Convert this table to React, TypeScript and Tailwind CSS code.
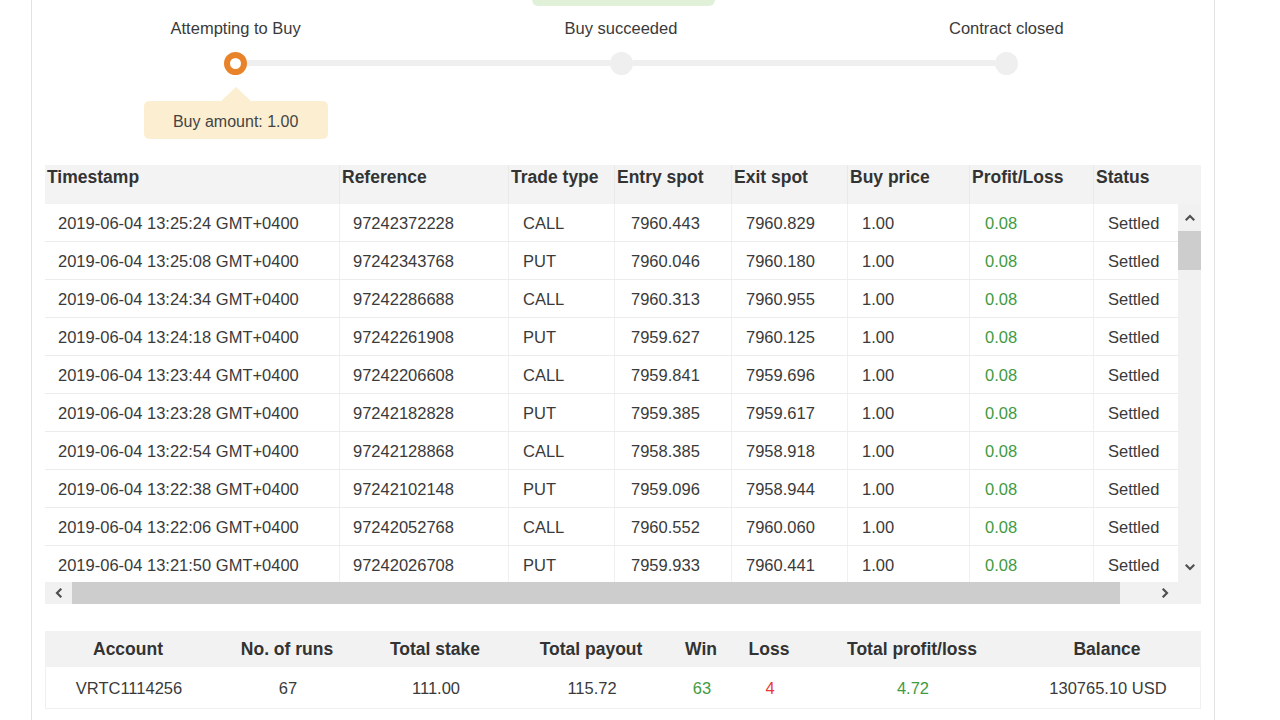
import React from 'react';

type Trade = {
  time: string;
  ref: string;
  type: 'CALL' | 'PUT';
  entry: string;
  exit: string;
};

const trades: Trade[] = [
  { time: '2019-06-04 13:25:24 GMT+0400', ref: '97242372228', type: 'CALL', entry: '7960.443', exit: '7960.829' },
  { time: '2019-06-04 13:25:08 GMT+0400', ref: '97242343768', type: 'PUT', entry: '7960.046', exit: '7960.180' },
  { time: '2019-06-04 13:24:34 GMT+0400', ref: '97242286688', type: 'CALL', entry: '7960.313', exit: '7960.955' },
  { time: '2019-06-04 13:24:18 GMT+0400', ref: '97242261908', type: 'PUT', entry: '7959.627', exit: '7960.125' },
  { time: '2019-06-04 13:23:44 GMT+0400', ref: '97242206608', type: 'CALL', entry: '7959.841', exit: '7959.696' },
  { time: '2019-06-04 13:23:28 GMT+0400', ref: '97242182828', type: 'PUT', entry: '7959.385', exit: '7959.617' },
  { time: '2019-06-04 13:22:54 GMT+0400', ref: '97242128868', type: 'CALL', entry: '7958.385', exit: '7958.918' },
  { time: '2019-06-04 13:22:38 GMT+0400', ref: '97242102148', type: 'PUT', entry: '7959.096', exit: '7958.944' },
  { time: '2019-06-04 13:22:06 GMT+0400', ref: '97242052768', type: 'CALL', entry: '7960.552', exit: '7960.060' },
  { time: '2019-06-04 13:21:50 GMT+0400', ref: '97242026708', type: 'PUT', entry: '7959.933', exit: '7960.441' },
];

const headers = ['Timestamp', 'Reference', 'Trade type', 'Entry spot', 'Exit spot', 'Buy price', 'Profit/Loss', 'Status'];

const summaryHead = ['Account', 'No. of runs', 'Total stake', 'Total payout', 'Win', 'Loss', 'Total profit/loss', 'Balance'];

// small chevrons used by the fake scrollbars
const Chevron: React.FC<{ dir: 'up' | 'down' | 'left' | 'right' }> = ({ dir }) => {
  const d = {
    up: 'M1.5 6.5 L5 3 L8.5 6.5',
    down: 'M1.5 3.5 L5 7 L8.5 3.5',
    left: 'M6.5 1.5 L3 5 L6.5 8.5',
    right: 'M3.5 1.5 L7 5 L3.5 8.5',
  }[dir];
  return (
    <svg width="10" height="10" viewBox="0 0 10 10">
      <path d={d} fill="none" stroke="#505050" strokeWidth="2.2" strokeLinecap="square" />
    </svg>
  );
};

const Step: React.FC<{ label: string; first?: boolean; last?: boolean; active?: boolean; children?: React.ReactNode }> = ({
  label,
  first,
  last,
  active,
  children,
}) => (
  <div className="flex flex-col items-center">
    <div className="text-[16.5px] leading-[19px] text-[#3a3a3a]">{label}</div>
    <div className="mt-[13px] flex h-[24px] w-full items-center">
      <div className={`h-[6px] flex-1 ${first ? '' : 'bg-[#efefef]'}`} />
      {active ? (
        <div className="h-[23px] w-[23px] rounded-full border-[6px] border-[#e8832a] bg-white" />
      ) : (
        <div className="h-[23px] w-[23px] rounded-full bg-[#efefef]" />
      )}
      <div className={`h-[6px] flex-1 ${last ? '' : 'bg-[#efefef]'}`} />
    </div>
    {children}
  </div>
);

const App: React.FC = () => {
  return (
    <div className="h-[720px] w-[1280px] overflow-hidden bg-white font-['Liberation_Sans',Arial,sans-serif] text-[#333]">
      <div className="ml-[31px] h-full w-[1184px] border-x border-[#e2e2e2] bg-white">
        <div className="flex justify-center">
          <div className="h-[6px] w-[183px] rounded-b-[8px] bg-[#e0f0d9]" />
        </div>

        <div className="mt-[13px] grid grid-cols-3 pl-[11px] pr-[15px]">
          <Step label="Attempting to Buy" first active>
            <div className="mt-[12px] flex flex-col items-center">
              <div className="h-0 w-0 border-x-[15px] border-b-[14px] border-x-transparent border-b-[#fcefd1]" />
              <div className="flex h-[38px] w-[184px] items-center justify-center rounded-[5px] bg-[#fcefd1] pt-[3px] text-[16px] text-[#444]">
                Buy amount: 1.00
              </div>
            </div>
          </Step>
          <Step label="Buy succeeded" />
          <Step label="Contract closed" last />
        </div>

        <div className="mt-[26px] px-[13px]">
          <div className="grid h-[39px] grid-cols-[295px_169px_106px_117px_116px_122px_124px_107px] bg-[#f3f3f3]">
            {headers.map((h, i) => (
              <div
                key={h}
                className={`pl-[2px] pt-[2px] text-[17.5px] font-bold leading-[21px] text-[#333] ${
                  i < headers.length - 1 ? 'border-r border-[#e9e9e9]' : ''
                }`}
              >
                {h}
              </div>
            ))}
          </div>

          <div className="flex">
            <div className="w-[1133px]">
              <div className="h-[378px] overflow-hidden">
                {trades.map((t) => (
                  <div
                    key={t.ref}
                    className="grid h-[38px] grid-cols-[295px_169px_106px_117px_116px_122px_124px_84px] border-b border-[#ececec] text-[16.5px] text-[#3a3a3a]"
                  >
                    <div className="flex items-center border-r border-[#f0f0f0] pl-[13px] pt-[2px]">{t.time}</div>
                    <div className="flex items-center border-r border-[#f0f0f0] pl-[13px] pt-[2px]">{t.ref}</div>
                    <div className="flex items-center border-r border-[#f0f0f0] pl-[14px] pt-[2px]">{t.type}</div>
                    <div className="flex items-center border-r border-[#f0f0f0] pl-[16px] pt-[2px]">{t.entry}</div>
                    <div className="flex items-center border-r border-[#f0f0f0] pl-[14px] pt-[2px]">{t.exit}</div>
                    <div className="flex items-center border-r border-[#f0f0f0] pl-[14px] pt-[2px]">1.00</div>
                    <div className="flex items-center border-r border-[#f0f0f0] pl-[15px] pt-[2px] text-[#3f9b3f]">0.08</div>
                    <div className="flex items-center pl-[14px] pt-[2px]">Settled</div>
                  </div>
                ))}
              </div>
              <div className="flex h-[22px] bg-[#f1f1f1]">
                <div className="flex w-[27px] items-center justify-center">
                  <Chevron dir="left" />
                </div>
                <div className="w-[1048px] bg-[#cdcdcd]" />
                <div className="flex-1" />
                <div className="flex w-[27px] items-center justify-center">
                  <Chevron dir="right" />
                </div>
              </div>
            </div>
            <div className="flex w-[23px] flex-col bg-[#f1f1f1]">
              <div className="flex h-[27px] items-center justify-center">
                <Chevron dir="up" />
              </div>
              <div className="h-[39px] bg-[#cdcdcd]" />
              <div className="flex-1" />
              <div className="flex h-[30px] items-center justify-center">
                <Chevron dir="down" />
              </div>
              <div className="h-[22px]" />
            </div>
          </div>

          <div className="mt-[27px]">
            <div className="grid h-[36px] grid-cols-[166px_152px_144px_168px_52px_84px_202px_188px] items-center bg-[#f2f2f2] pt-[1px] text-[17.5px] font-bold text-[#333]">
              {summaryHead.map((h) => (
                <div key={h} className="text-center">
                  {h}
                </div>
              ))}
            </div>
            <div className="grid h-[42px] grid-cols-[166px_152px_144px_168px_52px_84px_202px_188px] items-center border-x border-b border-[#f0f0f0] pt-[2px] text-[16.5px] text-[#3a3a3a]">
              <div className="text-center">VRTC1114256</div>
              <div className="text-center">67</div>
              <div className="text-center">111.00</div>
              <div className="text-center">115.72</div>
              <div className="text-center text-[#3f9b3f]">63</div>
              <div className="text-center text-[#e53935]">4</div>
              <div className="text-center text-[#3f9b3f]">4.72</div>
              <div className="text-center">130765.10 USD</div>
            </div>
          </div>
        </div>
      </div>
    </div>
  );
};

export default App;
